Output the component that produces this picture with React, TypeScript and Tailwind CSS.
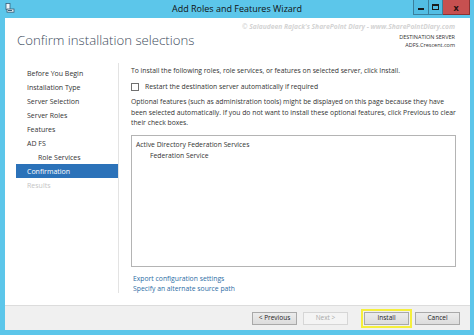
const navItems = [
  { label: "Before You Begin" },
  { label: "Installation Type" },
  { label: "Server Selection" },
  { label: "Server Roles" },
  { label: "Features" },
  { label: "AD FS" },
  { label: "Role Services", indent: true },
  { label: "Confirmation", active: true },
  { label: "Results", disabled: true },
];

function WizardButton({
  children,
  disabled,
  className = "",
}: {
  children: React.ReactNode;
  disabled?: boolean;
  className?: string;
}) {
  return (
    <button
      type="button"
      disabled={disabled}
      className={`flex h-[13px] w-[45px] items-center justify-center border text-[6.5px] leading-none ${
        disabled
          ? "border-[#d6d6d6] bg-[#f4f4f4] text-[#a8a8a8]"
          : "border-[#a9a9a9] bg-gradient-to-b from-[#ececec] to-[#dcdcdc] text-[#222]"
      } ${className}`}
    >
      {children}
    </button>
  );
}

export default function App() {
  return (
    <div className="flex h-[335px] w-[474px] flex-col bg-[#5cc6ea] font-['Open_Sans',sans-serif] text-[#1e1e1e]">
      {/* title bar */}
      <div className="relative flex h-[18px] shrink-0 items-center justify-center">
        <svg className="absolute left-[5px] top-[3px]" width="10" height="10" viewBox="0 0 10 10">
          <rect x="1" y="0.5" width="4" height="6" fill="#eef6fb" stroke="#3a5f78" strokeWidth="0.8" />
          <rect x="2" y="6" width="7" height="3.2" fill="#dfe9ef" stroke="#3a5f78" strokeWidth="0.8" />
          <rect x="3" y="7" width="4" height="1" fill="#3a5f78" />
        </svg>
        <span className="text-[9px] text-[#111]">Add Roles and Features Wizard</span>
        <div className="absolute right-[4px] top-0 flex h-[15px]">
          <div className="flex w-[16px] items-center justify-center border-x border-b border-[#3b7f9c] bg-[#52bde3]">
            <span className="mt-[3px] h-[2px] w-[6px] bg-[#1a1a1a]" />
          </div>
          <div className="flex w-[14px] items-center justify-center border-b border-r border-[#3b7f9c] bg-[#52bde3]">
            <span className="h-[6px] w-[7px] border-[1.5px] border-t-[2px] border-[#1a1a1a]" />
          </div>
          <div className="flex w-[27px] items-center justify-center border-b border-r border-[#8a3232] bg-[#c75050] text-[9px] font-bold leading-none text-[#2a1010]">
            x
          </div>
        </div>
      </div>

      {/* window body */}
      <div className="ml-[5px] mr-[4px] flex flex-1 flex-col bg-white">
        {/* header */}
        <div className="flex h-[45px] shrink-0 justify-between pl-[12px] pr-[15px]">
          <h1 className="mt-[16px] text-[13.2px] font-light leading-none text-[#3d4c5c]">
            Confirm installation selections
          </h1>
          <div className="flex flex-col items-end">
            <span className="mt-[6px] text-[6.7px] font-bold italic leading-none text-[#d4d4d4]">
              © Salaudeen Rajack's SharePoint Diary - www.SharePointDiary.com
            </span>
            <span className="mt-[4px] text-[5.5px] leading-none text-[#333]">DESTINATION SERVER</span>
            <span className="mt-[3px] text-[5.5px] leading-none text-[#333]">ADFS.Crescent.com</span>
          </div>
        </div>

        {/* content */}
        <div className="flex flex-1">
          <nav className="ml-[11px] flex w-[102px] flex-col pt-[3px]">
            {navItems.map((item) => (
              <div
                key={item.label}
                className={`flex h-[14px] items-center text-[7px] leading-none ${
                  item.indent ? "pl-[22px]" : "pl-[11px]"
                } ${
                  item.active
                    ? "bg-[#2b72b9] text-white"
                    : item.disabled
                    ? "text-[#c4c4c4]"
                    : "text-[#333]"
                }`}
              >
                {item.label}
              </div>
            ))}
          </nav>
          <div className="mb-[12px] w-px bg-[#e3e3e3]" />
          <div className="flex flex-1 flex-col pl-[12px] pr-[4px] pt-[3px] text-[6.8px] text-[#333]">
            <p className="leading-[10px]">
              To install the following roles, role services, or features on selected server, click Install.
            </p>
            <label className="mt-[7px] flex items-center gap-[6px] leading-none">
              <span className="h-[8px] w-[8px] border border-[#707070] bg-white" />
              Restart the destination server automatically if required
            </label>
            <p className="mt-[6px] whitespace-nowrap leading-[10.5px]">
              Optional features (such as administration tools) might be displayed on this page because they have
              <br />
              been selected automatically. If you do not want to install these optional features, click Previous to clear
              <br />
              their check boxes.
            </p>
            <div className="mr-[10px] mt-[6px] h-[132px] border border-[#b4b4b4] px-[4px] pt-[3px] leading-[11px]">
              <div>Active Directory Federation Services</div>
              <div className="pl-[14px]">Federation Service</div>
            </div>
            <div className="mt-[7px] flex flex-col pl-[2px] leading-[10px] text-[#2d6ea5]">
              <a href="#">Export configuration settings</a>
              <a href="#">Specify an alternate source path</a>
            </div>
          </div>
        </div>

        {/* footer */}
        <div className="flex h-[25px] shrink-0 items-center border-t border-[#dcdcdc] bg-[#f0f0f0] pl-[247px]">
          <WizardButton>&lt; Previous</WizardButton>
          <WizardButton disabled className="ml-[6px]">
            Next &gt;
          </WizardButton>
          <div className="ml-[13px] border-2 border-[#f5ef3c] p-px">
            <WizardButton className="w-[42px]">Install</WizardButton>
          </div>
          <WizardButton className="ml-[3px]">Cancel</WizardButton>
        </div>
      </div>
      <div className="h-[5px] shrink-0" />
    </div>
  );
}
